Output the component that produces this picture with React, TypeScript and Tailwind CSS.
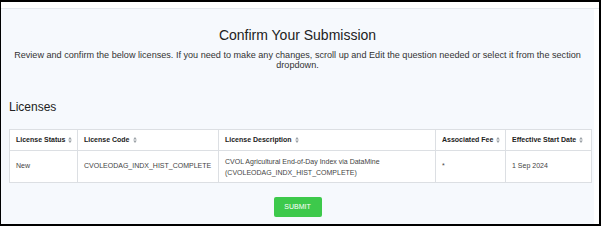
/*
 * Confirm submission step — licence summary table with submit button.
 */

const columns = [
  { label: "License Status", width: "w-[68px]" },
  { label: "License Code", width: "w-[141px]" },
  { label: "License Description", width: "w-[217px]" },
  { label: "Associated Fee", width: "w-[70px]" },
  { label: "Effective Start Date", width: "w-[86px]" },
];

function SortIcon() {
  return (
    <svg viewBox="0 0 6 10" className="ml-[3px] inline-block h-[6px] w-[4px] align-middle" fill="#9aa0a6">
      <path d="M3 0 L6 4 L0 4 Z" />
      <path d="M3 10 L6 6 L0 6 Z" />
    </svg>
  );
}

export default function App() {
  return (
    <div
      className="box-border flex h-[226px] w-[601px] flex-col overflow-hidden border-2 border-l border-black bg-[#f6f9fd]"
      style={{ fontFamily: "'Liberation Sans', Arial, sans-serif" }}
    >
      <div className="h-[7px] shrink-0 border-b border-[#e4e8ee] bg-white" />

      <div className="flex flex-1 flex-row">
        <div className="flex flex-1 flex-col">
          <h1 className="mt-[18px] text-center text-[14px] leading-[16px] text-[#222]">
            Confirm Your Submission
          </h1>
          <p className="mx-auto mt-[7px] w-[580px] text-center text-[9.1px] leading-[10px] text-[#333]">
            Review and confirm the below licenses. If you need to make any changes, scroll up and Edit the question
            needed or select it from the section dropdown.
          </p>

          <h2 className="ml-[8px] mt-[30px] text-[12px] leading-[14px] text-[#222]">Licenses</h2>

          <table className="ml-[8px] mt-[15px] w-[582px] table-fixed border-collapse bg-white text-[7px] text-[#444]">
            <thead>
              <tr className="h-[21px]">
                {columns.map((c) => (
                  <th
                    key={c.label}
                    className={`${c.width} whitespace-nowrap border border-[#dcdfe3] px-[6px] text-left font-bold text-[#222]`}
                  >
                    {c.label}
                    <SortIcon />
                  </th>
                ))}
              </tr>
            </thead>
            <tbody>
              <tr className="h-[32px]">
                <td className="border border-[#dcdfe3] px-[6px]">New</td>
                <td className="border border-[#dcdfe3] px-[6px]">CVOLEODAG_INDX_HIST_COMPLETE</td>
                <td className="border border-[#dcdfe3] px-[6px] leading-[11px]">
                  CVOL Agricultural End-of-Day Index via DataMine
                  <br />
                  (CVOLEODAG_INDX_HIST_COMPLETE)
                </td>
                <td className="border border-[#dcdfe3] px-[6px]">*</td>
                <td className="border border-[#dcdfe3] px-[6px]">1 Sep 2024</td>
              </tr>
            </tbody>
          </table>

          <div className="mt-[14px] flex justify-center">
            <button className="h-[20px] w-[48px] rounded-[2px] bg-[#3dc94b] text-[7px] font-medium text-white">
              SUBMIT
            </button>
          </div>
        </div>
        <div className="w-[5px] shrink-0 bg-white" />
      </div>
    </div>
  );
}
